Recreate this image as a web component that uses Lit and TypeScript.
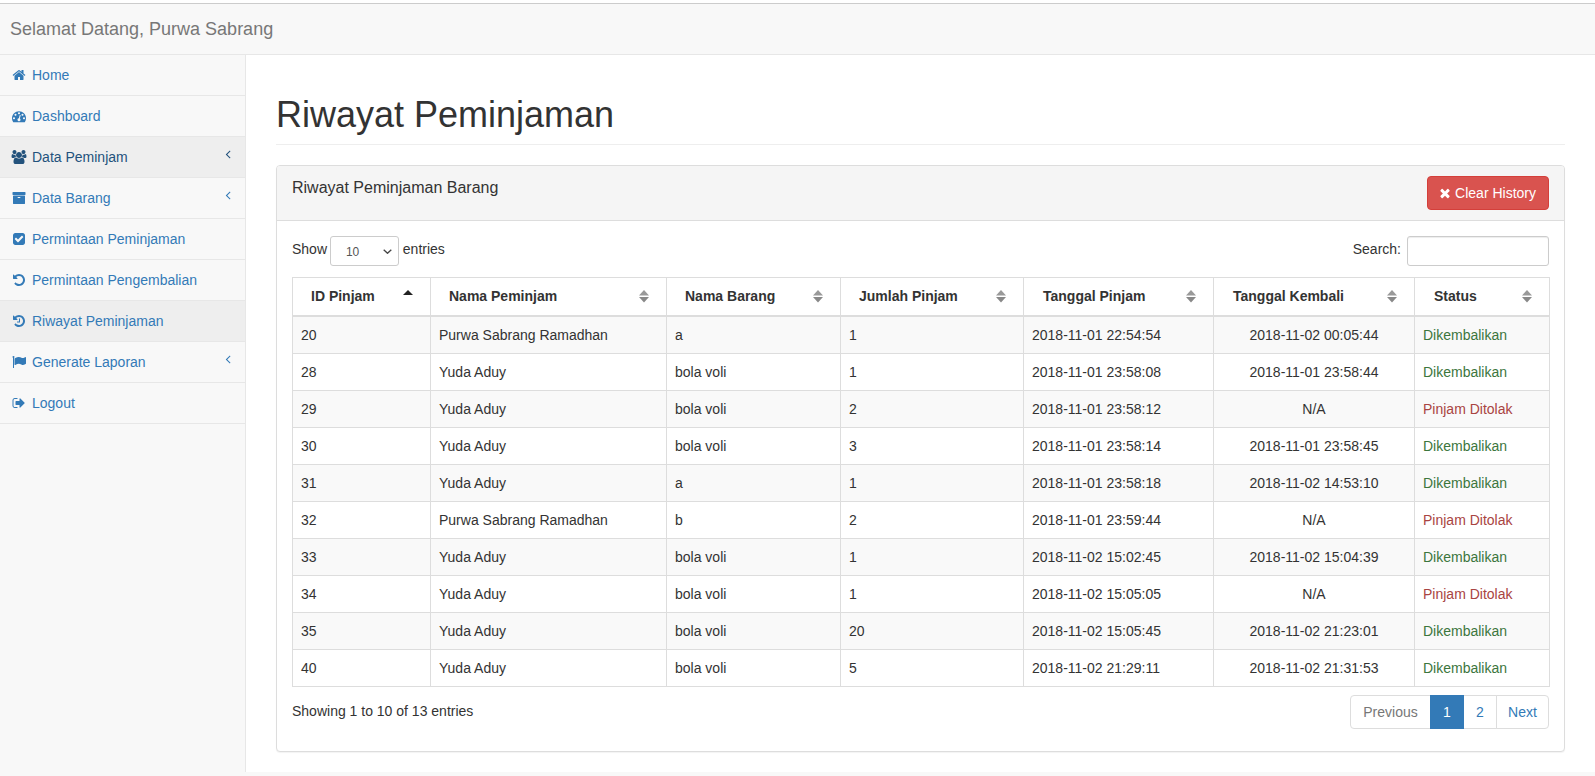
import { LitElement, html, css, svg } from "lit";
import { customElement } from "lit/decorators.js";

const P: Record<string, [string, string]> = {
  home: ["0 0 1792 1792", "M1472 992v480q0 26-19 45t-45 19h-384v-384h-256v384h-384q-26 0-45-19t-19-45v-480q0-1 .5-3t.5-3l575-474 575 474q1 2 1 6zm223-69l-62 74q-8 9-21 11h-3q-13 0-21-7l-692-577-692 577q-12 8-24 7-13-2-21-11l-62-74q-8-10-7-23.5t11-21.5l719-599q32-26 76-26t76 26l244 204v-195q0-14 9-23t23-9h192q14 0 23 9t9 23v408l219 182q10 8 11 21.5t-7 23.5z"],
  dashboard: ["0 0 1792 1792", "M384 1184q0-53-37.5-90.5t-90.5-37.5-90.5 37.5-37.5 90.5 37.5 90.5 90.5 37.5 90.5-37.5 37.5-90.5zm192-448q0-53-37.5-90.5t-90.5-37.5-90.5 37.5-37.5 90.5 37.5 90.5 90.5 37.5 90.5-37.5 37.5-90.5zm428 481l101-382q6-26-7.5-48.5t-38.5-29.5-48 6.5-30 39.5l-101 382q-60 5-107 43.5t-63 98.5q-20 77 20 146t117 89 146-20 89-117q16-60-6-117t-72-91zm660-33q0-53-37.5-90.5t-90.5-37.5-90.5 37.5-37.5 90.5 37.5 90.5 90.5 37.5 90.5-37.5 37.5-90.5zm-640-640q0-53-37.5-90.5t-90.5-37.5-90.5 37.5-37.5 90.5 37.5 90.5 90.5 37.5 90.5-37.5 37.5-90.5zm448 192q0-53-37.5-90.5t-90.5-37.5-90.5 37.5-37.5 90.5 37.5 90.5 90.5 37.5 90.5-37.5 37.5-90.5zm320 448q0 261-141 483-19 29-54 29h-1402q-35 0-54-29-141-221-141-483 0-182 71-348t191-286 286-191 348-71 348 71 286 191 191 286 71 348z"],
  users: ["0 0 1920 1792", "M593 896q-162 5-265 128h-134q-82 0-138-40.5t-56-118.5q0-353 124-353 6 0 43.5 21t97.5 42.5 119 21.5q67 0 133-23-5 37-5 66 0 139 81 256zm1071 637q0 120-73 189.5t-194 69.5h-874q-121 0-194-69.5t-73-189.5q0-53 3.5-103.5t14-109 26.5-108.5 43-97.5 62-81 85.5-53.5 111.5-20q10 0 43 21.5t73 48 107 48 135 21.5 135-21.5 107-48 73-48 43-21.5q61 0 111.5 20t85.5 53.5 62 81 43 97.5 26.5 108.5 14 109 3.5 103.5zm-1024-1277q0 106-75 181t-181 75-181-75-75-181 75-181 181-75 181 75 75 181zm704 384q0 159-112.5 271.5t-271.5 112.5-271.5-112.5-112.5-271.5 112.5-271.5 271.5-112.5 271.5 112.5 112.5 271.5zm576 225q0 78-56 118.5t-138 40.5h-134q-103-123-265-128 81-117 81-256 0-29-5-66 66 23 133 23 59 0 119-21.5t97.5-42.5 43.5-21q124 0 124 353zm-128-609q0 106-75 181t-181 75-181-75-75-181 75-181 181-75 181 75 75 181z"],
  archive: ["0 0 1792 1792", "M1088 832q0-26-19-45t-45-19h-256q-26 0-45 19t-19 45 19 45 45 19h256q26 0 45-19t19-45zm576-192v960q0 26-19 45t-45 19h-1408q-26 0-45-19t-19-45v-960q0-26 19-45t45-19h1408q26 0 45 19t19 45zm64-448v256q0 26-19 45t-45 19h-1536q-26 0-45-19t-19-45v-256q0-26 19-45t45-19h1536q26 0 45 19t19 45z"],
  check: ["0 0 1792 1792", "M813 1299l614-614q19-19 19-45t-19-45l-102-102q-19-19-45-19t-45 19l-467 467-211-211q-19-19-45-19t-45 19l-102 102q-19 19-19 45t19 45l358 358q19 19 45 19t45-19zm851-883v960q0 119-84.5 203.5t-203.5 84.5h-960q-119 0-203.5-84.5t-84.5-203.5v-960q0-119 84.5-203.5t203.5-84.5h960q119 0 203.5 84.5t84.5 203.5z"],
  undo: ["0 0 1792 1792", "M1664 896q0 156-61 298t-164 245-245 164-298 61q-172 0-327-72.5t-264-204.5q-7-10-6.5-22.5t8.5-20.5l137-138q10-9 25-9 16 2 23 12 73 95 179 147t225 52q104 0 198.5-40.5t163.5-109.5 109.5-163.5 40.5-198.5-40.5-198.5-109.5-163.5-163.5-109.5-198.5-40.5q-98 0-188 35.5t-160 101.5l137 138q31 30 14 69-17 40-59 40h-448q-26 0-45-19t-19-45v-448q0-42 40-59 39-17 69 14l130 129q107-101 244.5-156.5t284.5-55.5q156 0 298 61t245 164 164 245 61 298z"],
  history: ["0 0 1792 1792", "M1664 896q0 156-61 298t-164 245-245 164-298 61q-172 0-327-72.5t-264-204.5q-7-10-6.5-22.5t8.5-20.5l137-138q10-9 25-9 16 2 23 12 73 95 179 147t225 52q104 0 198.5-40.5t163.5-109.5 109.5-163.5 40.5-198.5-40.5-198.5-109.5-163.5-163.5-109.5-198.5-40.5q-98 0-188 35.5t-160 101.5l137 138q31 30 14 69-17 40-59 40h-448q-26 0-45-19t-19-45v-448q0-42 40-59 39-17 69 14l130 129q107-101 244.5-156.5t284.5-55.5q156 0 298 61t245 164 164 245 61 298zm-640-288v448q0 14-9 23t-23 9h-320q-14 0-23-9t-9-23v-64q0-14 9-23t23-9h224v-352q0-14 9-23t23-9h64q14 0 23 9t9 23z"],
  flag: ["0 0 1792 1792", "M320 256q0 72-64 110v1266q0 13-9.5 22.5t-22.5 9.5h-64q-13 0-22.5-9.5t-9.5-22.5v-1266q-64-38-64-110 0-53 37.5-90.5t90.5-37.5 90.5 37.5 37.5 90.5zm1472 64v763q0 25-12.5 38.5t-39.5 27.5q-215 116-369 116-61 0-123.5-22t-108.5-48-115.5-48-142.5-22q-192 0-464 146-17 9-33 9-26 0-45-19t-19-45v-742q0-32 31-55 21-14 79-43 236-120 421-120 107 0 200 29t219 88q38 19 88 19 54 0 117.5-21t110-47 88-47 54.5-21q26 0 45 19t19 45z"],
  signout: ["0 0 1792 1792", "M704 1440q0 4 1 20t.5 26.5-3 23.5-10 19.5-20.5 6.5h-320q-119 0-203.5-84.5t-84.5-203.5v-704q0-119 84.5-203.5t203.5-84.5h320q13 0 22.5 9.5t9.5 22.5q0 4 1 20t.5 26.5-3 23.5-10 19.5-20.5 6.5h-320q-66 0-113 47t-47 113v704q0 66 47 113t113 47h312l11.5 1 11.5 3 8 5.5 7 9 2 13.5zm928-544q0 26-19 45l-544 544q-19 19-45 19t-45-19-19-45v-288h-448q-26 0-45-19t-19-45v-384q0-26 19-45t45-19h448v-288q0-26 19-45t45-19 45 19l544 544q19 19 19 45z"],
  times: ["0 0 1792 1792", "M1490 1322q0 40-28 68l-136 136q-28 28-68 28t-68-28l-294-294-294 294q-28 28-68 28t-68-28l-136-136q-28-28-28-68t28-68l294-294-294-294q-28-28-28-68t28-68l136-136q28-28 68-28t68 28l294 294 294-294q28-28 68-28t68 28l136 136q28 28 28 68t-28 68l-294 294 294 294q28 28 28 68z"],
  angle: ["0 0 1792 1792", "M1203 544q0 13-10 23l-393 393 393 393q10 10 10 23t-10 23l-50 50q-10 10-23 10t-23-10l-466-466q-10-10-10-23t10-23l466-466q10-10 23-10t23 10l50 50q10 10 10 23z"],
};

const icon = (n: string, cls = "fa") => {
  const [vb, d] = P[n];
  return svg`<svg class=${cls} viewBox=${vb} aria-hidden="true"><path fill="currentColor" d=${d}></path></svg>`;
};

const NAV = [
  { i: "home", t: "Home" },
  { i: "dashboard", t: "Dashboard" },
  { i: "users", t: "Data Peminjam", arrow: true, open: true },
  { i: "archive", t: "Data Barang", arrow: true },
  { i: "check", t: "Permintaan Peminjaman" },
  { i: "undo", t: "Permintaan Pengembalian" },
  { i: "history", t: "Riwayat Peminjaman", current: true },
  { i: "flag", t: "Generate Laporan", arrow: true },
  { i: "signout", t: "Logout" },
];

const HEAD = ["ID Pinjam", "Nama Peminjam", "Nama Barang", "Jumlah Pinjam", "Tanggal Pinjam", "Tanggal Kembali", "Status"];
const PS = "Purwa Sabrang Ramadhan";
const YA = "Yuda Aduy";
const BV = "bola voli";
const D = "Dikembalikan";
const T = "Pinjam Ditolak";
const ROWS: [string, string, string, string, string, string, string][] = [
  ["20", PS, "a", "1", "2018-11-01 22:54:54", "2018-11-02 00:05:44", D],
  ["28", YA, BV, "1", "2018-11-01 23:58:08", "2018-11-01 23:58:44", D],
  ["29", YA, BV, "2", "2018-11-01 23:58:12", "N/A", T],
  ["30", YA, BV, "3", "2018-11-01 23:58:14", "2018-11-01 23:58:45", D],
  ["31", YA, "a", "1", "2018-11-01 23:58:18", "2018-11-02 14:53:10", D],
  ["32", PS, "b", "2", "2018-11-01 23:59:44", "N/A", T],
  ["33", YA, BV, "1", "2018-11-02 15:02:45", "2018-11-02 15:04:39", D],
  ["34", YA, BV, "1", "2018-11-02 15:05:05", "N/A", T],
  ["35", YA, BV, "20", "2018-11-02 15:05:45", "2018-11-02 21:23:01", D],
  ["40", YA, BV, "5", "2018-11-02 21:29:11", "2018-11-02 21:31:53", D],
];

@customElement("app-root")
export class AppRoot extends LitElement {
  static styles = css`
    :host {
      display: block;
      height: 776px;
      overflow: hidden;
      background: #f8f8f8;
      font-family: "Liberation Sans", Arial, sans-serif;
      font-size: 14px;
      line-height: 20px;
      color: #333;
    }
    * { box-sizing: border-box; }
    .topgap { height: 3px; background: #fff; }
    .navbar {
      height: 52px;
      background: #f8f8f8;
      border-top: 1px solid #ccc;
      border-bottom: 1px solid #e7e7e7;
      padding: 15px 10px;
      font-size: 18px;
      line-height: 20px;
      color: #777;
    }
    .layout { display: flex; height: 717px; }
    .sidebar { width: 246px; flex: none; border-right: 1px solid #e7e7e7; }
    .nav a {
      display: flex;
      align-items: center;
      height: 41px;
      padding: 0 10px;
      border-bottom: 1px solid #e7e7e7;
      color: #337ab7;
      text-decoration: none;
      position: relative;
    }
    .nav a.open { background: #eee; color: #23527c; }
    .nav a.current { background: #eee; }
    .fa { width: 18px; height: 14px; flex: none; margin-right: 4px; }
    .arrow { position: absolute; right: 10px; top: 10px; width: 14px; height: 14px; }
    .main { flex: 1; min-width: 0; background: #fff; padding: 0 30px; }
    h1 {
      margin: 40px 0 20px;
      padding-bottom: 9px;
      border-bottom: 1px solid #eee;
      font-size: 36px;
      font-weight: 500;
      line-height: 39.6px;
      color: #333;
    }
    .panel {
      border: 1px solid #ddd;
      border-radius: 4px;
      box-shadow: 0 1px 1px rgba(0, 0, 0, .05);
      background: #fff;
    }
    .panel-head {
      display: flex;
      justify-content: space-between;
      align-items: flex-start;
      height: 55px;
      padding: 10px 15px;
      background: #f5f5f5;
      border-bottom: 1px solid #ddd;
      border-radius: 3px 3px 0 0;
    }
    .panel-title { font-size: 16px; line-height: 23px; color: #333; }
    .btn {
      display: inline-flex;
      align-items: center;
      height: 34px;
      padding: 0 12px 0 10.5px;
      border: 1px solid #d43f3a;
      border-radius: 4px;
      background: #d9534f;
      color: #fff;
      font: inherit;
    }
    .btn .fa { width: 14px; margin-right: 3px; height: 14px; }
    .panel-body { padding: 15px 15px 22px; }
    .controls {
      display: flex;
      justify-content: space-between;
      align-items: flex-start;
      height: 30px;
      margin-bottom: 11px;
      line-height: 26px;
    }
    .selwrap { position: relative; display: inline-block; vertical-align: top; margin: 0 0 0 -1px; }
    select {
      display: block;
      appearance: none;
      width: 69px;
      height: 30px;
      padding: 3px 0 0 15px;
      border: 1px solid #ccc;
      border-radius: 3px;
      background: #fff;
      color: #555;
      font: 12px "Liberation Sans", Arial, sans-serif;
    }
    .chev { position: absolute; right: 6.5px; top: 13px; width: 9px; height: 5px; pointer-events: none; }
    input {
      width: 142px;
      height: 30px;
      margin-left: 6px;
      vertical-align: top;
      border: 1px solid #ccc;
      border-radius: 3px;
      background: #fff;
      box-shadow: inset 0 1px 1px rgba(0, 0, 0, .075);
    }
    table {
      width: 1257px;
      table-layout: fixed;
      border-collapse: collapse;
      border: 1px solid #ddd;
    }
    th, td { border: 1px solid #ddd; height: 37px; padding: 8px; text-align: left; font-weight: 400; }
    th { position: relative; font-weight: 700; padding-left: 18px; height: 39px; border-bottom: 2px solid #ddd; }
    th:nth-child(n + 5) { padding-left: 19px; }
    td.center { text-align: center; }
    tbody tr:nth-child(odd) { background: #f9f9f9; }
    .ok { color: #3c763d; }
    .no { color: #a94442; }
    .sort { position: absolute; right: 17px; top: 12px; width: 10px; height: 13px; }
    .foot { display: flex; justify-content: space-between; margin-top: 8px; }
    .info { padding-top: 6px; }
    .pager { display: flex; height: 34px; }
    .pager a {
      display: flex;
      align-items: center;
      justify-content: center;
      border: 1px solid #ddd;
      margin-left: -1px;
      background: #fff;
      color: #337ab7;
    }
    .pager a:first-child { margin-left: 0; border-radius: 4px 0 0 4px; color: #777; width: 81px; }
    .pager a:last-child { border-radius: 0 4px 4px 0; width: 53px; }
    .pager a.page { width: 34px; }
    .pager a.active { background: #337ab7; border-color: #337ab7; color: #fff; z-index: 1; }
  `;

  render() {
    return html`
      <div class="topgap"></div>
      <div class="navbar">Selamat Datang, Purwa Sabrang</div>
      <div class="layout">
        <aside class="sidebar">
          <nav class="nav">
            ${NAV.map(
              (n) => html`<a class="${n.open ? "open" : ""} ${n.current ? "current" : ""}">
                ${icon(n.i)}<span>${n.t}</span>${n.arrow ? icon("angle", "arrow") : ""}
              </a>`
            )}
          </nav>
        </aside>
        <main class="main">
          <h1>Riwayat Peminjaman</h1>
          <section class="panel">
            <div class="panel-head">
              <div class="panel-title">Riwayat Peminjaman Barang</div>
              <button class="btn">${icon("times")}Clear History</button>
            </div>
            <div class="panel-body">
              <div class="controls">
                <div>
                  Show
                  <span class="selwrap">
                    <select><option>10</option></select>
                    <svg class="chev" viewBox="0 0 9 5"><path d="M.7.7 4.5 4.3 8.3.7" fill="none" stroke="#444" stroke-width="1.3"></path></svg>
                  </span>
                  entries
                </div>
                <div>Search:<input type="search" /></div>
              </div>
              <table>
                <colgroup>
                  <col style="width:138px" /><col style="width:236px" /><col style="width:174px" /><col style="width:183px" /><col style="width:190px" /><col style="width:201px" /><col style="width:135px" />
                </colgroup>
                <thead>
                  <tr>
                    ${HEAD.map(
                      (h, i) => html`<th>
                        ${h}
                        <svg class="sort" viewBox="0 0 10 13">
                          ${i === 0
                            ? svg`<path d="M5 0 10 5H0z" fill="#222"></path>`
                            : svg`<path d="M5 0 10 5.6H0z" fill="#999"></path><path d="M5 12.5 10 7H0z" fill="#888"></path>`}
                        </svg>
                      </th>`
                    )}
                  </tr>
                </thead>
                <tbody>
                  ${ROWS.map(
                    (r) => html`<tr>
                      <td>${r[0]}</td><td>${r[1]}</td><td>${r[2]}</td><td>${r[3]}</td><td>${r[4]}</td>
                      <td class="center">${r[5]}</td>
                      <td class=${r[6] === D ? "ok" : "no"}>${r[6]}</td>
                    </tr>`
                  )}
                </tbody>
              </table>
              <div class="foot">
                <div class="info">Showing 1 to 10 of 13 entries</div>
                <div class="pager">
                  <a>Previous</a><a class="page active">1</a><a class="page">2</a><a>Next</a>
                </div>
              </div>
            </div>
          </section>
        </main>
      </div>
    `;
  }
}
